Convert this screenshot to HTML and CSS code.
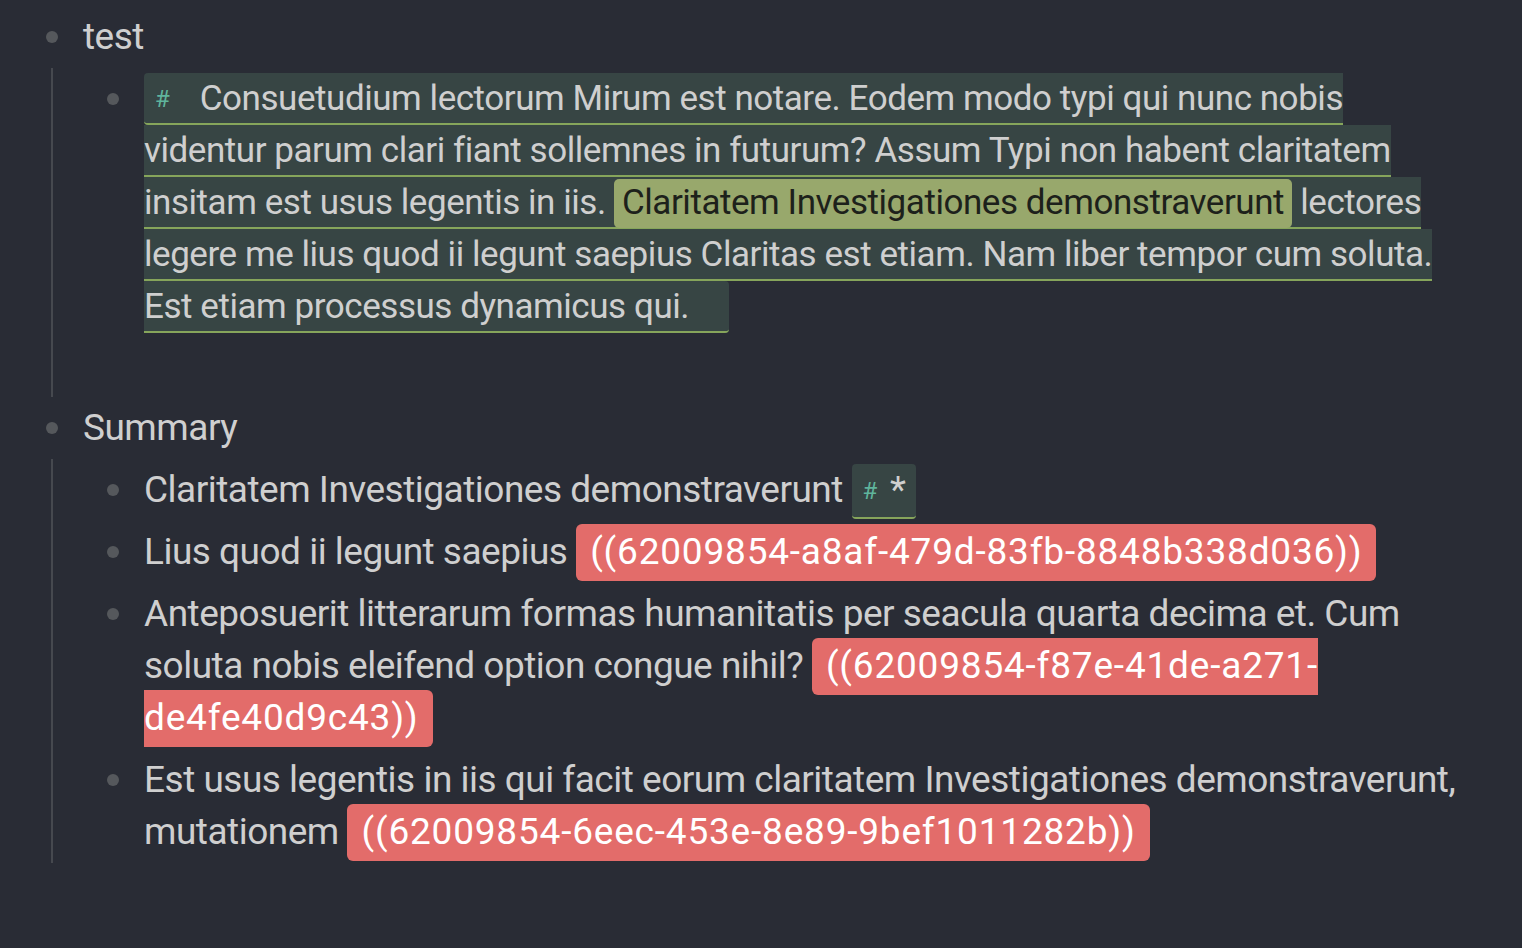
FILE: index.html
```html
<!DOCTYPE html>
<html lang="en">
<head>
  <meta charset="UTF-8" />
  <title>Outline</title>
  <link rel="stylesheet" href="styles.css">
</head>
<body>
  <div class="page">

    <div class="block">
      <div class="row">
        <span class="bullet-wrap"><span class="bullet"></span></span>
        <div class="content">test</div>
      </div>
      <div class="children first-children">
        <div class="block">
          <div class="row">
            <span class="bullet-wrap"><span class="bullet"></span></span>
            <div class="content quote-content">
              <span class="quote"><span class="hash">#</span>Consuetudium lectorum Mirum est notare. Eodem modo typi qui nunc nobis videntur parum clari fiant sollemnes in futurum? Assum Typi non habent claritatem insitam est usus legentis in iis. <mark class="hl">Claritatem Investigationes demonstraverunt</mark> lectores legere me lius quod ii legunt saepius Claritas est etiam. Nam liber tempor cum soluta. Est etiam processus dynamicus qui.</span>
            </div>
          </div>
        </div>
      </div>
    </div>

    <div class="block">
      <div class="row">
        <span class="bullet-wrap"><span class="bullet"></span></span>
        <div class="content">Summary</div>
      </div>
      <div class="children">
        <div class="block">
          <div class="row">
            <span class="bullet-wrap"><span class="bullet"></span></span>
            <div class="content">Claritatem Investigationes demonstraverunt <span class="tag"><span class="hash">#</span> *</span></div>
          </div>
        </div>
        <div class="block">
          <div class="row">
            <span class="bullet-wrap"><span class="bullet"></span></span>
            <div class="content">Lius quod ii legunt saepius <span class="ref">((62009854-a8af-479d-83fb-8848b338d036))</span></div>
          </div>
        </div>
        <div class="block">
          <div class="row">
            <span class="bullet-wrap"><span class="bullet"></span></span>
            <div class="content">Anteposuerit litterarum formas humanitatis per seacula quarta decima et. Cum soluta nobis eleifend option congue nihil? <span class="ref">((62009854-f87e-41de-a271-de4fe40d9c43))</span></div>
          </div>
        </div>
        <div class="block">
          <div class="row">
            <span class="bullet-wrap"><span class="bullet"></span></span>
            <div class="content">Est usus legentis in iis qui facit eorum claritatem Investigationes demonstraverunt, mutationem <span class="ref">((62009854-6eec-453e-8e89-9bef1011282b))</span></div>
          </div>
        </div>
      </div>
    </div>

  </div>
</body>
</html>
```

FILE: styles.css
```css
* {
  box-sizing: border-box;
}

html,
body {
  margin: 0;
  background: #292c35;
}

body {
  font-family: Roboto, "Noto Sans", sans-serif;
  font-size: 37px;
  letter-spacing: -0.5px;
  font-variant-ligatures: none;
  color: #cfcfcf;
  padding: 6px 50px 0 37px;
  min-height: 948px;
}

.page {
  width: 1433px;
}

.row {
  display: flex;
  align-items: flex-start;
  padding: 5px 0;
}

.bullet-wrap {
  flex: 0 0 30px;
  height: 52px;
  margin-right: 16px;
  display: flex;
  align-items: center;
  justify-content: center;
}

.bullet {
  width: 12px;
  height: 12px;
  border-radius: 50%;
  background: #55585c;
}

.content {
  flex: 1;
  line-height: 52px;
}

/* guide line under a parent bullet */
.children {
  margin-left: 14px;
  border-left: 2px solid #46494f;
  padding-left: 45px;
}

.first-children {
  padding-bottom: 59px;
}

/* quoted block text */
.quote-content {
  font-size: 35px;
  letter-spacing: -0.45px;
}

.quote {
  background: #374544;
  border-bottom: 2px solid #86a55b;
  border-radius: 4px;
  padding: 5px 40px 4px 0;
}

.hash {
  color: #5fb49c;
  font-size: 24px;
  line-height: 1;
  letter-spacing: 0;
  padding: 0 30px 0 11px;
  vertical-align: 3px;
}

.hl {
  background: #98a86c;
  color: #1d211b;
  border-radius: 5px;
  padding: 3px 8px 5px;
}

.tag {
  background: #374544;
  border-bottom: 2px solid #86a55b;
  border-radius: 4px;
  padding: 4px 11px 6px;
}

.tag .hash {
  padding: 0 4px 0 0;
}

.ref {
  background: #e36c6a;
  color: #ffffff;
  letter-spacing: 0.8px;
  border-radius: 6px;
  padding: 6px 14px 8px;
}
```
